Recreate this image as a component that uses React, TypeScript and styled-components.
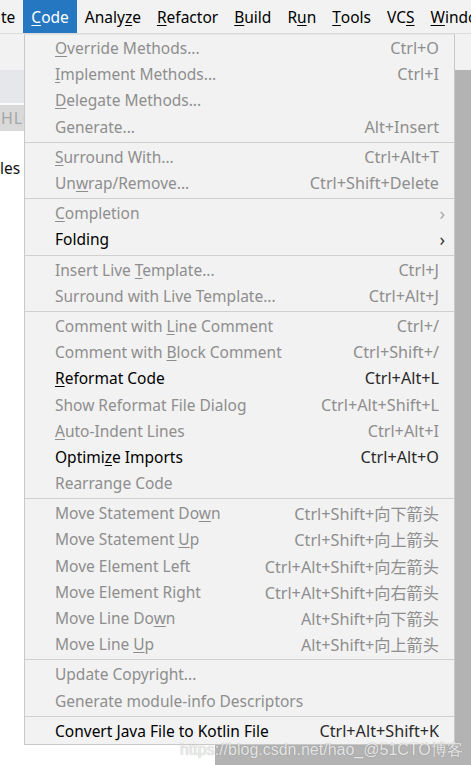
import React from 'react'
import styled, { createGlobalStyle } from 'styled-components'

type Item = {
  label: string;
  mn?: number;
  key?: string;
  on?: boolean;
  sub?: boolean;
}

const groups: Item[][] = [
  [
    { label: 'Override Methods...', mn: 0, key: 'Ctrl+O' },
    { label: 'Implement Methods...', mn: 0, key: 'Ctrl+I' },
    { label: 'Delegate Methods...', mn: 0 },
    { label: 'Generate...', key: 'Alt+Insert' },
  ],
  [
    { label: 'Surround With...', mn: 0, key: 'Ctrl+Alt+T' },
    { label: 'Unwrap/Remove...', mn: 2, key: 'Ctrl+Shift+Delete' },
  ],
  [
    { label: 'Completion', mn: 0, sub: true },
    { label: 'Folding', on: true, sub: true },
  ],
  [
    { label: 'Insert Live Template...', mn: 12, key: 'Ctrl+J' },
    { label: 'Surround with Live Template...', key: 'Ctrl+Alt+J' },
  ],
  [
    { label: 'Comment with Line Comment', mn: 13, key: 'Ctrl+/' },
    { label: 'Comment with Block Comment', mn: 13, key: 'Ctrl+Shift+/' },
    { label: 'Reformat Code', mn: 0, key: 'Ctrl+Alt+L', on: true },
    { label: 'Show Reformat File Dialog', key: 'Ctrl+Alt+Shift+L' },
    { label: 'Auto-Indent Lines', mn: 0, key: 'Ctrl+Alt+I' },
    { label: 'Optimize Imports', mn: 6, key: 'Ctrl+Alt+O', on: true },
    { label: 'Rearrange Code' },
  ],
  [
    { label: 'Move Statement Down', mn: 17, key: 'Ctrl+Shift+向下箭头' },
    { label: 'Move Statement Up', mn: 15, key: 'Ctrl+Shift+向上箭头' },
    { label: 'Move Element Left', key: 'Ctrl+Alt+Shift+向左箭头' },
    { label: 'Move Element Right', key: 'Ctrl+Alt+Shift+向右箭头' },
    { label: 'Move Line Down', mn: 12, key: 'Alt+Shift+向下箭头' },
    { label: 'Move Line Up', mn: 10, key: 'Alt+Shift+向上箭头' },
  ],
  [
    { label: 'Update Copyright...' },
    { label: 'Generate module-info Descriptors' },
  ],
  [
    { label: 'Convert Java File to Kotlin File', key: 'Ctrl+Alt+Shift+K', on: true },
  ],
]

const bar = [
  { t: 'te' },
  { t: 'Code', mn: 0, active: true },
  { t: 'Analyze', mn: 5 },
  { t: 'Refactor', mn: 0 },
  { t: 'Build', mn: 0 },
  { t: 'Run', mn: 1 },
  { t: 'Tools', mn: 0 },
  { t: 'VCS', mn: 2 },
  { t: 'Window', mn: 0 },
]

const withMnemonic = (text: string, mn?: number) => {
  if (mn === undefined) return text
  return (
    <>
      {text.slice(0, mn)}
      <U>{text[mn]}</U>
      {text.slice(mn + 1)}
    </>
  )
}

const App: React.FC = () => {
  return (
    <Screen>
      <GlobalStyle />
      <MenuBar>
        {bar.map((b) => (
          <BarItem key={b.t} $active={!!b.active}>{withMnemonic(b.t, b.mn)}</BarItem>
        ))}
      </MenuBar>
      <TabStrip />
      <Workspace>
        <EditorPane>
          <Breadcrumb />
          <Header>HLC</Header>
          <Content>
            <Line>les</Line>
          </Content>
        </EditorPane>
        <SidePane />
      </Workspace>

      <Popup>
        {groups.map((g, gi) => (
          <React.Fragment key={gi}>
            {gi > 0 && <Separator />}
            {g.map((it) => (
              <Row key={it.label} $on={!!it.on}>
                <Label>{withMnemonic(it.label, it.mn)}</Label>
                {it.key && <Shortcut $on={!!it.on}>{it.key}</Shortcut>}
                {it.sub && <Arrow $on={!!it.on}>›</Arrow>}
              </Row>
            ))}
          </React.Fragment>
        ))}
      </Popup>

      <Watermark>https://blog.csdn.net/hao_@51CTO博客</Watermark>
    </Screen>
  )
}

export default App

const GlobalStyle = createGlobalStyle`
  html, body {
    margin: 0;
    padding: 0;
    background: #fff;
  }
  body {
    font-family: "Noto Sans", "Noto Sans CJK SC", sans-serif;
    font-size: 15px;
  }
`;

const Screen = styled.div`
  position: relative;
  width: 471px;
  height: 765px;
  overflow: hidden;
  display: flex;
  flex-direction: column;
  background: #fff;
`;

const MenuBar = styled.div`
  height: 34px;
  flex: none;
  display: flex;
  align-items: stretch;
  background: #f2f2f2;
  border-bottom: 1px solid #dcdcdc;
  box-sizing: border-box;
  margin-left: -7px;
  white-space: nowrap;
`;

const BarItem = styled.div<{ $active: boolean }>`
  display: flex;
  align-items: center;
  padding: 0 8px;
  font-size: 15.5px;
  color: ${({ $active }) => ($active ? '#fff' : '#000')};
  background: ${({ $active }) => ($active ? '#2677c2' : 'transparent')};
`;

const U = styled.span`
  text-decoration: underline;
  text-underline-offset: 2px;
  text-decoration-thickness: 1px;
`;

const TabStrip = styled.div`
  height: 36px;
  flex: none;
  background: #f2f2f2;
`;

const Workspace = styled.div`
  flex: 1;
  display: flex;
`;

const EditorPane = styled.div`
  flex: 1;
  display: flex;
  flex-direction: column;
`;

const Breadcrumb = styled.div`
  height: 33px;
  background: #e5e7eb;
  border-bottom: 2px solid #fafafa;
`;

const Header = styled.div`
  height: 26px;
  background: #d9d9d9;
  color: #a6a6a6;
  font-size: 16px;
  line-height: 26px;
  padding-left: 1px;
  letter-spacing: 1px;
`;

const Content = styled.div`
  flex: 1;
  background: #fff;
  padding-top: 26px;
`;

const Line = styled.div`
  font-size: 15.5px;
  color: #111;
  padding-left: 0;
`;

const SidePane = styled.div`
  width: 256px;
  background: #b3b3b3;
`;

const Popup = styled.div`
  position: absolute;
  left: 24px;
  top: 34px;
  width: 431px;
  box-sizing: border-box;
  background: #f2f2f2;
  border: 1px solid #c8c8c8;
  border-top-color: #e4e4e4;
`;

const Row = styled.div<{ $on: boolean }>`
  height: 26.2px;
  display: flex;
  align-items: center;
  padding: 0 15px 0 30px;
  font-size: 15.5px;
  color: ${({ $on }) => ($on ? '#000' : '#8e8e8e')};
  white-space: nowrap;
`;

const Label = styled.span`
  flex: 1;
`;

const Shortcut = styled.span<{ $on: boolean }>`
  font-size: 16.2px;
  color: ${({ $on }) => ($on ? '#2a2a2a' : '#8e8e8e')};
`;

const Arrow = styled.span<{ $on: boolean }>`
  font-size: 18px;
  margin-right: -6px;
  color: ${({ $on }) => ($on ? '#333' : '#a8a8a8')};
`;

const Separator = styled.div`
  height: 1px;
  background: #d0d0d0;
  margin: 2px 0 1px;
`;

const Watermark = styled.div`
  position: absolute;
  left: 180px;
  top: 740px;
  font-family: "Liberation Sans", sans-serif;
  font-size: 16px;
  color: rgba(255, 255, 255, 0.8);
  text-shadow: 0 0 1px rgba(110, 110, 110, 0.7);
  white-space: nowrap;
`;
